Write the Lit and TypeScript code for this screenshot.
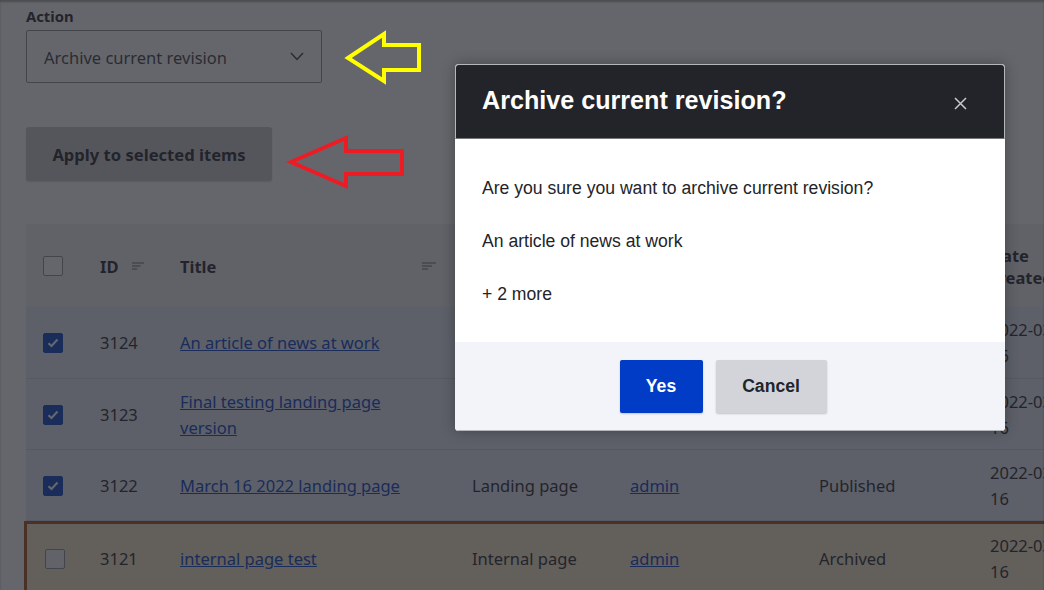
import { LitElement, html, css, svg } from "lit";
import { customElement } from "lit/decorators.js";

const sort = (w: number) => svg`<svg class="sort" width="${w}" height="8" viewBox="0 0 14 8" preserveAspectRatio="none"><path d="M0 1h14M0 4h10M0 7h6" stroke="currentColor" stroke-width="1.5" fill="none"/></svg>`;
const check = svg`<svg width="12" height="10" viewBox="0 0 12 10"><path d="M1.5 5.2 4.5 8 10.5 1.6" stroke="#fff" stroke-width="2.2" fill="none"/></svg>`;

const rows = [
  { id: "3124", title: "An article of news at work", type: "Article", status: "Published", checked: true },
  { id: "3123", title: "Final testing landing page version", type: "Landing page", status: "Published", checked: true },
  { id: "3122", title: "March 16 2022 landing page", type: "Landing page", status: "Published", checked: true },
  { id: "3121", title: "internal page test", type: "Internal page", status: "Archived", checked: false },
];

@customElement("app-root")
export class AppRoot extends LitElement {
  static styles = css`
    :host { display: block; position: relative; width: 1044px; height: 590px; overflow: hidden; background: #fff; font-family: "Noto Sans", sans-serif; font-size: 16.5px; color: #232429; }
    .page { display: flex; flex-direction: column; align-items: flex-start; padding: 6px 0 0 26px; width: 1120px; box-sizing: border-box; }
    .label { font-size: 14.8px; font-weight: 700; line-height: 20px; margin-bottom: 4px; }
    .select { box-sizing: border-box; width: 296px; height: 53px; border: 1px solid #8e929c; border-radius: 2px; display: flex; align-items: center; justify-content: space-between; padding: 1px 17px 0; color: #3b3c42; }
    .select svg { margin-top: -2px; }
    .apply { box-sizing: border-box; width: 246px; height: 54px; margin-top: 44px; border: 0; border-radius: 3px; background: #c8c9ce; font: 700 16.6px "Noto Sans", sans-serif; color: #232429; padding: 1px 0 0; box-shadow: 0 1px 2px rgba(0, 0, 0, 0.15); }
    .table { margin-top: 43px; width: 1094px; }
    .row { display: grid; grid-template-columns: 74px 80px 292px 158px 189px 171px 130px; align-items: center; box-sizing: border-box; line-height: 26px; }
    .head { height: 83px; background: #f0f1f6; font-weight: 700; line-height: 22px; padding-top: 3px; }
    .item { min-height: 71px; background: #e4eaf8; border-bottom: 1px solid #d3d4d9; padding: 10px 0 8px; }
    .head + .item { min-height: 72px; padding: 9px 0; }
    .archived { margin-left: -2px; grid-template-columns: 73px 80px 292px 158px 189px 171px 130px; background: #f8e6c8; border: 3px solid #a04f18; border-width: 3px 0 0 3px; padding: 9px 0 10px; }
    .head > div:first-child { padding-left: 17px; margin-top: -2px; }
    .item > div:first-child { padding-left: 17px; }
    .archived > div:first-child { padding-left: 18px; }
    .sorted { display: flex; align-items: center; gap: 13px; }
    .between { justify-content: space-between; padding-right: 36px; }
    .sort { color: #8e929c; margin-top: -3px; }
    .title { padding-right: 40px; }
    .cb { box-sizing: border-box; width: 20px; height: 20px; border: 1px solid #8e929c; border-radius: 2px; background: #fff; display: flex; align-items: center; justify-content: center; }
    .cb.on { background: #003cc5; border-color: #003cc5; }
    .archived .cb { background: #f3f4f9; }
    .cb-cell { display: flex; }
    a { color: #003cc5; text-decoration: underline; }
    .overlay { position: absolute; inset: 0; background: rgba(35, 37, 44, 0.7); box-shadow: inset 0 2px 2px rgba(0, 0, 0, 0.25); }
    .arrow { position: absolute; left: 0; top: 0; }
    .modal { position: absolute; left: 455px; top: 64px; width: 550px; height: 367px; box-sizing: border-box; display: flex; flex-direction: column; background: #fff; border-radius: 4px; overflow: hidden; font-family: "Liberation Sans", Arial, sans-serif; box-shadow: 0 0 14px rgba(0, 0, 0, 0.3); }
    .m-head { height: 75px; box-sizing: border-box; background: #232429; color: #fff; display: flex; align-items: center; justify-content: space-between; padding: 0 37px 2px 26px; border: 1px solid #b5b6ba; border-bottom-color: #77787c; border-radius: 4px 4px 0 0; }
    .m-head h2 { margin: 0; font-size: 25.15px; font-weight: 700; }
    .close { display: block; margin-top: 6px; }
    .m-body { flex: 1; padding: 23px 26px 0 27px; font-size: 17.6px; }
    .m-body p { margin: 0; line-height: 53px; }
    .m-foot { height: 89px; box-sizing: border-box; background: #f3f4f9; border-bottom: 1px solid #b5b6ba; display: flex; justify-content: center; gap: 13px; padding: 18px 14px 0 0; }
    .btn { height: 53px; border: 0; border-radius: 2px; font: 700 17.6px "Liberation Sans", Arial, sans-serif; padding: 0; box-shadow: 0 1px 2px rgba(0, 0, 0, 0.2); }
    .yes { background: #003cc5; color: #fff; width: 83px; }
    .no { background: #d3d4d9; color: #232429; width: 111px; }
  `;

  private cells(r: (typeof rows)[number]) {
    return html`
      <div class="cb-cell"><span class="cb ${r.checked ? "on" : ""}">${r.checked ? check : ""}</span></div>
      <div>${r.id}</div>
      <div class="title"><a href="#">${r.title}</a></div>
      <div>${r.type}</div>
      <div><a href="#">admin</a></div>
      <div>${r.status}</div>
      <div>2022-03-<br />16</div>`;
  }

  render() {
    return html`
      <div class="page">
        <div class="label">Action</div>
        <div class="select">
          <span>Archive current revision</span>
          <svg width="14" height="9" viewBox="0 0 14 9"><path d="M1 1 7 7.5 13 1" stroke="#3b3c42" stroke-width="1.5" fill="none"/></svg>
        </div>
        <button class="apply">Apply to selected items</button>
        <div class="table">
          <div class="row head">
            <div class="cb-cell"><span class="cb"></span></div>
            <div class="sorted">ID ${sort(12)}</div>
            <div class="sorted between">Title ${sort(14)}</div>
            <div>Type</div>
            <div>Author</div>
            <div>Status</div>
            <div>Date<br />created</div>
          </div>
          ${rows.map((r) => html`<div class="row ${r.status === "Archived" ? "archived" : "item"}">${this.cells(r)}</div>`)}
        </div>
      </div>
      <div class="overlay"></div>
      <svg class="arrow" width="1044" height="590">
        <path d="M348 58 384 34V45H419V70H384V81Z" fill="none" stroke="#ffff00" stroke-width="4"/>
        <path d="M291 162 346 138V151H402V174H346V186Z" fill="none" stroke="#ed1c24" stroke-width="4"/>
      </svg>
      <div class="modal">
        <div class="m-head">
          <h2>Archive current revision?</h2>
          <svg class="close" width="13" height="13" viewBox="0 0 13 13"><path d="M1 1 12 12M12 1 1 12" stroke="#c8c9ce" stroke-width="1.5" fill="none"/></svg>
        </div>
        <div class="m-body">
          <p>Are you sure you want to archive current revision?</p>
          <p>An article of news at work</p>
          <p>+ 2 more</p>
        </div>
        <div class="m-foot">
          <button class="btn yes">Yes</button>
          <button class="btn no">Cancel</button>
        </div>
      </div>
    `;
  }
}
